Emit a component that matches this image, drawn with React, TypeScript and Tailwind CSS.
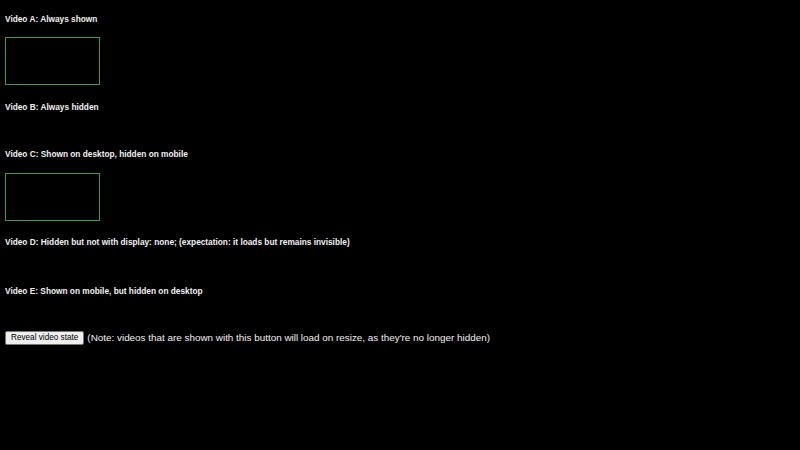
import React from "react";

const Label: React.FC<{ children: React.ReactNode }> = ({ children }) => (
  <div className="text-[8.3px] leading-[12px] font-bold text-[#f2f2f2]">{children}</div>
);

const VideoBox: React.FC = () => (
  <div className="w-[95px] h-[48px] border border-[#3f9a4f] bg-black" />
);

export default function App() {
  return (
    <div
      className="w-[800px] h-[450px] bg-black px-[5px] pt-[13px] overflow-hidden"
      style={{ fontFamily: '"Liberation Sans", Arial, sans-serif' }}
    >
      {/* Video A */}
      <Label>Video A: Always shown</Label>
      <div className="mt-[12px]">
        <VideoBox />
      </div>

      {/* Video B */}
      <div className="mt-[16px]">
        <Label>Video B: Always hidden</Label>
      </div>

      {/* Video C */}
      <div className="mt-[35px]">
        <Label>Video C: Shown on desktop, hidden on mobile</Label>
      </div>
      <div className="mt-[13px]">
        <VideoBox />
      </div>

      {/* Video D */}
      <div className="mt-[15px]">
        <Label>Video D: Hidden but not with display: none; (expectation: it loads but remains invisible)</Label>
      </div>

      {/* Video E */}
      <div className="mt-[37px]">
        <Label>Video E: Shown on mobile, but hidden on desktop</Label>
      </div>

      <div className="mt-[34px] flex items-center gap-[3px]">
        <button className="h-[14px] px-[5px] bg-[#efefef] border border-[#767676] rounded-[2px] text-[8.2px] leading-[12px] text-black">
          Reveal video state
        </button>
        <span className="text-[9.9px] leading-[14px] text-[#f2f2f2]">
          (Note: videos that are shown with this button will load on resize, as they're no longer hidden)
        </span>
      </div>
    </div>
  );
}
